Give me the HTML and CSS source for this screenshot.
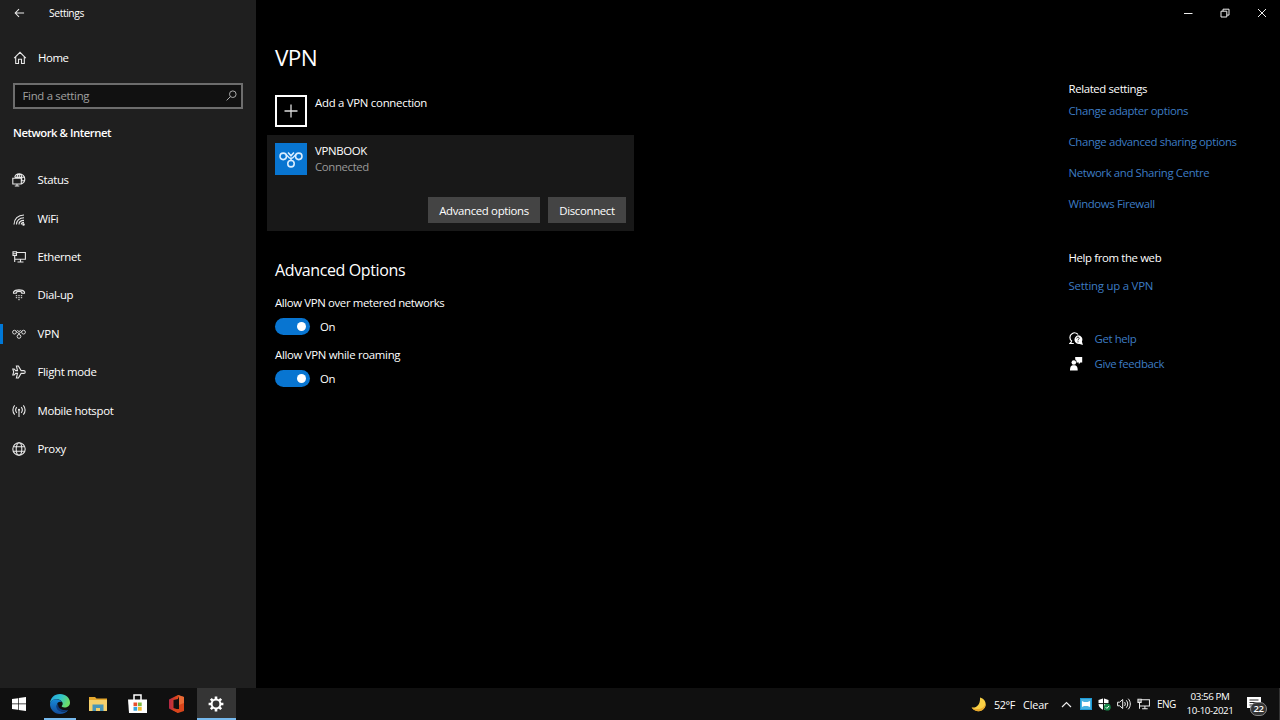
FILE: index.html
```html
<!DOCTYPE html>
<html lang="en">
<head>
<meta charset="utf-8">
<title>Settings</title>
<link rel="stylesheet" href="styles.css">
</head>
<body>
<svg class="defs" width="0" height="0">
  <symbol id="vpn" viewBox="0 0 26 18"><g fill="none" stroke="currentColor" stroke-width="1.7"><circle cx="4.600" cy="5.600" r="3.500"/><circle cx="21.400" cy="5.600" r="3.500"/><circle cx="13" cy="13.500" r="3.500"/><path d="M7.300 3.500c2 .6 2.600 4.300 5.700 4.300s3.700-3.700 5.700-4.300M9.800 1.500l3.200 3.500 3.200-3.500M13 7.500v2.500"/></g></symbol>
  <symbol id="eth" viewBox="0 0 14 12"><g fill="none" stroke="currentColor" stroke-width="1.1"><path d="M5 1.500h8.400v6.700H4.500M8.500 8.500v2.500M5.500 11h6M1 .8h3.500v3.700H1zM2.700 4.500V11M1 2.700h3.500M2.700 8.200H5"/></g></symbol>
</svg>
<div class="window">
  <aside class="sidebar">
    <header class="titlebar">
      <svg class="back" viewBox="0 0 12 10"><path d="M5.500.8L1.300 5l4.200 4.200M1.300 5H11"/></svg>
      <span class="caption">Settings</span>
    </header>
    <a class="home"><svg class="icon" viewBox="0 0 14 14"><path d="M1.200 7.200L7 1.400l5.800 5.800M2.700 6v6.500h2.800V8.200h3v4.300h2.800V6"/></svg><span>Home</span></a>
    <div class="search"><span>Find a setting</span><svg viewBox="0 0 11 11"><circle cx="6.800" cy="4.200" r="3.300"/><path d="M4.500 6.500L.6 10.400"/></svg></div>
    <h2 class="section">Network &amp; Internet</h2>
    <nav class="nav">
      <a class="item"><svg class="icon" viewBox="0 0 14 14"><path d="M2.700 4.300C3.200 2 5 .8 7.300.8c3.100 0 5.500 2.300 5.500 5.200 0 2.400-1.300 4-3 4.700M3 4.300h9.500M5 4.300C5.300 2.500 6 .8 7.300.8c1.400 0 2.200 1.700 2.400 3.500v3M9.700 7.800h3M7.300.8v3.500M.8 5.300h8.500v5.700H.8zM5 11v2M2.800 13h4.500"/></svg><span>Status</span></a>
      <a class="item"><svg class="icon" viewBox="0 0 14 14"><path d="M2 12.500C2 7 6 3 12 3M4.500 12.500C4.500 8.500 7.500 5.800 12 5.800M7 12.500C7 10 9 8.400 12 8.400M9.300 12.500c0-1.300 1.200-2.100 2.700-2.100"/><circle cx="11.500" cy="12.400" r=".7" fill="currentColor"/></svg><span>WiFi</span></a>
      <a class="item"><svg class="icon eth"><use href="#eth"/></svg><span>Ethernet</span></a>
      <a class="item"><svg class="icon" viewBox="0 0 14 14"><path d="M1.500 5.200V4C3.500 1.200 10.500 1.200 12.500 4v1.200H9.700V4C8.500 3.200 5.500 3.200 4.300 4v1.200z"/><path d="M3.800 7.700h1.400m1.100 0h1.400m1.100 0h1.400M3.800 9.700h1.400m1.100 0h1.400m1.100 0h1.400M6.300 11.700h1.400" stroke-width="1"/></svg><span>Dial-up</span></a>
      <a class="item active"><svg class="icon vpn"><use href="#vpn"/></svg><span class="v">VPN</span></a>
      <a class="item"><svg class="icon" viewBox="0 0 14 14"><path d="M.8 4h1.400l1.400 1.600h1.900L4.400 1h2l2.700 4.600h2.700c1.900 0 1.900 2.800 0 2.800H9.100L6.400 13h-2l1.100-4.600H3.600L2.200 10H.8l.9-3z"/></svg><span>Flight mode</span></a>
      <a class="item"><svg class="icon" viewBox="0 0 14 14"><path d="M2.700 1.400C.3 4 .3 8 2.700 10.600M4.800 3.200c-1.400 1.700-1.400 4 0 5.700M11.300 1.400c2.400 2.600 2.400 6.600 0 9.200M9.200 3.200c1.400 1.700 1.400 4 0 5.700M7 5.500V13"/><circle cx="7" cy="5.700" r=".5"/></svg><span>Mobile hotspot</span></a>
      <a class="item"><svg class="icon" viewBox="0 0 14 14"><circle cx="7" cy="7" r="6.200"/><ellipse cx="7" cy="7" rx="2.800" ry="6.200"/><path d="M1.500 4.700h11M1.500 9.300h11"/></svg><span>Proxy</span></a>
    </nav>
  </aside>
  <main class="content">
    <h1 class="title">VPN</h1>
    <div class="add"><span class="plus"><svg viewBox="0 0 16 16"><path d="M8 1.500v13M1.500 8h13"/></svg></span><span>Add a VPN connection</span></div>
    <section class="card">
      <div class="connection"><span class="tile"><svg><use href="#vpn"/></svg></span><div class="names"><span class="name">VPNBOOK</span><span class="state">Connected</span></div></div>
      <div class="actions"><button class="btn wide">Advanced options</button><button class="btn">Disconnect</button></div>
    </section>
    <h2 class="subtitle">Advanced Options</h2>
    <div class="option"><span class="metered">Allow VPN over metered networks</span><div class="toggle-row"><i class="toggle"></i><span class="on">On</span></div></div>
    <div class="option"><span class="roaming">Allow VPN while roaming</span><div class="toggle-row"><i class="toggle"></i><span class="on">On</span></div></div>
  </main>
  <aside class="related">
    <div class="controls">
      <svg viewBox="0 0 10 10"><path d="M1 5.500h8.500"/></svg>
      <svg viewBox="0 0 10 10"><path d="M1 3.200h5.800V9H1zM3 3.200V1.200h6v5.900H6.800"/></svg>
      <svg viewBox="0 0 10 10"><path d="M1 1l8 8M9 1L1 9"/></svg>
    </div>
    <h3 class="rel-head">Related settings</h3>
    <div class="links"><a>Change adapter options</a><a>Change advanced sharing options</a><a>Network and Sharing Centre</a><a>Windows Firewall</a></div>
    <h3 class="help-head">Help from the web</h3>
    <a class="setup">Setting up a VPN</a>
    <div class="support">
      <a><svg viewBox="0 0 14 14"><path d="M3 9.300C.2 7.500.2 3.400 3 1.700 5 .4 7.700.8 9 2.500M2.800 9.300L.8 11.500h4" fill="none" stroke="#fff" stroke-width="1.200"/><path d="M9 3.300a4.300 4.300 0 0 1 3.900 6.200l1 3.500-3.200-1.100A4.300 4.300 0 1 1 9 3.300z" fill="#fff"/><path d="M7.600 6.400c.2-1.800 3-1.500 2.500.2-.2.700-1.100.8-1.100 1.800M9 9.300v1" fill="none" stroke="#000" stroke-width=".9"/></svg><span>Get help</span></a>
      <a><svg viewBox="0 0 14 14" fill="#fff"><path d="M6.200 0h7v5.500h-1.800L9.800 7.200V5.500H7.500C7.700 3.700 7.300 3 6.200 2.500z"/><circle cx="4.800" cy="5.500" r="2.300"/><path d="M1 13.500c0-3.300.8-5.200 3.800-5.200s3.900 1.900 3.900 5.200z"/></svg><span>Give feedback</span></a>
    </div>
  </aside>
</div>
<footer class="taskbar">
  <div class="apps">
    <span class="app start"><svg width="14" height="14" viewBox="0 0 14 14" fill="#fff"><path d="M0 2l6-.8v5.400H0zM6.700 1.100L14 0v6.600H6.700zM0 7.300h6v5.500L0 12zM6.700 7.300H14V14l-7.300-1.100z"/></svg></span>
    <span class="app running"><svg width="20" height="20" viewBox="0 0 20 20"><defs><linearGradient id="eg" x1="0" y1="0" x2="1" y2=".4"><stop offset="0" stop-color="#239fe3"/><stop offset=".55" stop-color="#30c4cb"/><stop offset="1" stop-color="#6bdc68"/></linearGradient><linearGradient id="eb" x1="0" y1="0" x2="0" y2="1"><stop offset="0" stop-color="#1689d8"/><stop offset="1" stop-color="#134c9b"/></linearGradient></defs><path d="M0 10C0 4 4.300 0 10 0s10 4 10 8.500c0 3.500-2.400 5-5.500 5-2 0-3-.8-2.800-1.400.5-.8 1-1.200 1-2.400C12.700 6.800 9 4.800 5.500 5.300 2.500 5.700.5 7.500 0 10z" fill="url(#eg)"/><path d="M0 10c.5-3 3-4.700 6-4.700 3 0 5.200 1.400 6.100 3C9.400 7 6.700 8.700 6.700 12c0 3.300 3.200 5.700 6.700 5.500 2 0 3.400-.7 4.800-1.500C16.400 18.500 13.400 20 10 20 4.300 20 0 15.500 0 10z" fill="url(#eb)"/><path d="M7.800 9.500c-3.500 4.800.7 8.500 5.600 8 2-.2 3.700-.8 4.800-1.500-5 .7-9.200-.7-9.900-4z" fill="#0d3c80"/></svg></span>
    <span class="app"><svg width="18" height="16" viewBox="0 0 18 16"><path d="M0 1h6l1.500 1.500H18V15H0z" fill="#e5a82e"/><path d="M0 4h18v11H0z" fill="#f5d06c"/><path d="M3.500 8.500h11V15H11v-3H7v3H3.500z" fill="#4995b8"/></svg></span>
    <span class="app"><svg width="19" height="20" viewBox="0 0 19 20"><path d="M6 6V1h7v5" fill="none" stroke="#fff" stroke-width="1.500"/><path d="M0 5.500h19V19H1z" fill="#fff"/><path d="M5.500 8.500h3.700v3.700H5.500z" fill="#e84e2c"/><path d="M10 8.500h3.700v3.700H10z" fill="#7eb83f"/><path d="M5.500 13h3.700v3.700H5.500z" fill="#36a3dc"/><path d="M10 13h3.700v3.700H10z" fill="#f5b829"/></svg></span>
    <span class="app"><svg width="15" height="18" viewBox="0 0 15 18"><defs><linearGradient id="of" x1="0" x2="1"><stop stop-color="#b52846"/><stop offset="1" stop-color="#e54b16"/></linearGradient></defs><path d="M0 4.500L9 0v4L4.500 5v8L9 14.500V18L0 13.500z" fill="url(#of)"/><path d="M9 0l6 2v14l-6 2L2.500 14.600 10 14V3.500z" fill="#d8451b"/><path d="M9 0l6 2v6l-5 2V3.500z" fill="#e96a35"/></svg></span>
    <span class="app current"><svg width="16" height="16" viewBox="0 0 16 16" fill="none" stroke="#fff"><circle cx="8" cy="8" r="4.400" stroke-width="2"/><path d="M8 .6v2.700M8 12.700v2.700M.6 8h2.700M12.700 8h2.700M2.800 2.800l1.900 1.900M11.300 11.300l1.900 1.900M2.800 13.200l1.900-1.900M11.300 4.700l1.900-1.900" stroke-width="2.600"/></svg></span>
  </div>
  <div class="tray">
    <svg class="moon" viewBox="0 0 15 15"><path d="M9 .5c5 1.200 7 6 4.800 10C11.300 15 4.500 15.800.6 10.500 6.500 11.300 9.500 6.500 9 .5z" fill="#f9d045"/><path d="M14.300 7c-1.500 5-7.500 6.500-13.700 3.500C4.500 15.800 11.300 15 13.800 10.500c.6-1.200.8-2.400.5-3.500z" fill="#e9a72a"/></svg>
    <span class="temp">52°F</span><span class="clear">Clear</span>
    <svg class="chev" viewBox="0 0 11 7"><path d="M1 6l4.500-4.500L10 6" fill="none" stroke="#eee" stroke-width="1.200"/></svg>
    <svg class="cam" viewBox="0 0 12 12"><path fill="#1e9bd7" d="M0 0h12v12H0z"/><path fill="#48b1e0" d="M1 1h10v10H1z"/><path fill="#fff" d="M2 3l2 1h3.500L10 3v6L7.500 8H4L2 9z"/></svg>
    <svg class="shield" viewBox="0 0 13 13"><path d="M5.500.3L10.500 2v3.500c0 3.500-2.300 5.300-5 6.500-2.700-1.200-5-3-5-6.500V2z" fill="#fff"/><path d="M5.500 0v12M0 5.600h11" stroke="#111" stroke-width="1"/><circle cx="9.300" cy="9.200" r="3.400" fill="#198b4c"/><path d="M7.700 9.200l1.200 1.200L11 8" fill="none" stroke="#fff"/></svg>
    <svg class="sound" viewBox="0 0 14 12" fill="none" stroke="#eee"><path d="M.6 4.200h2L5.700 1.500v9L2.600 7.800h-2zM7.500 4c1 1 1 3 0 4M9.300 2.300c1.900 2 1.900 5.400 0 7.400M11.200.7c2.800 3 2.800 7.600 0 10.600"/></svg>
    <svg class="net"><use href="#eth"/></svg>
    <span class="lang">ENG</span>
    <div class="clock"><span class="time">03:56 PM</span><span class="date">10-10-2021</span></div>
    <div class="notes"><svg viewBox="0 0 14 14"><path d="M0 0h14v11H7l-3 3v-3H0z" fill="#fff"/><path d="M2.500 3h9M2.500 5.500h9M2.500 8h5" stroke="#222"/></svg><span class="badge">22</span></div>
  </div>
</footer>
</body>
</html>
```
FILE: styles.css
```css
* { box-sizing: border-box; }
body { margin: 0; width: 1280px; height: 720px; overflow: hidden; background: #000; color: #fff; font: 11.4px/16px "Open Sans", "Noto Sans", sans-serif; letter-spacing: -.37px; }
h1, h2, h3 { margin: 0; font-weight: 400; }
svg { display: block; flex: none; }
span, a { white-space: nowrap; }
.defs { position: absolute; }
.window { display: grid; grid-template-columns: 256px 1fr 211.500px; height: 688px; }

.sidebar { background: #1f1f1f; }
.titlebar { display: flex; align-items: center; height: 26px; padding-left: 14px; font-size: 10.300px; letter-spacing: -.4px; }
.back { width: 11px; height: 10px; fill: none; stroke: #eee; stroke-width: 1.100; }
.caption { margin-left: 24px; }
.home { display: flex; align-items: center; height: 24px; margin-top: 20px; padding-left: 13px; gap: 11px; }
.home span { letter-spacing: -.4px; }
.icon { width: 14px; height: 14px; fill: none; stroke: #e8e8e8; stroke-width: 1.100; color: #e8e8e8; }
.search { display: flex; align-items: center; justify-content: space-between; width: 230.500px; height: 26px; margin: 13px 0 0 12.500px; padding: 0 4px 1px 8px; border: 2px solid #6d6d6d; background: #111; color: #a0a0a0; letter-spacing: -.3px; }
.search svg { width: 11px; height: 11px; fill: none; stroke: #aaa; }
.section { margin: 16px 0 0 13px; font-size: 11.300px; line-height: 16px; font-weight: 600; letter-spacing: -.45px; }
.nav { display: grid; grid-auto-rows: 38.400px; margin-top: 20px; }
.item { display: flex; align-items: center; gap: 11.500px; padding-left: 12px; letter-spacing: -.32px; }
.item .vpn { stroke: none; height: 10px; }
.item .eth { stroke: none; height: 12px; }
.item .v { letter-spacing: -.1px; }
.active { padding-left: 0; }
.active::before { content: ""; width: 3px; height: 20px; margin-right: -2.500px; background: #0078d7; }

.content { padding-left: 11px; }
.title { margin: 42px 0 0 8px; font-size: 22.500px; line-height: 32px; letter-spacing: -.6px; }
.add { display: flex; gap: 8px; margin: 21px 0 0 8px; height: 32px; letter-spacing: -.27px; }
.plus { display: grid; place-items: center; width: 32px; height: 32px; border: 2px solid #fff; }
.plus svg { width: 16px; height: 16px; stroke: #ddd; stroke-width: 1.300; }
.card { display: flex; flex-direction: column; justify-content: space-between; width: 367px; height: 96px; margin-top: 8px; padding: 8px; background: #181818; }
.connection { display: flex; gap: 8px; }
.tile { display: grid; place-items: center; width: 32px; height: 32px; background: #0875d1; color: #d9edff; }
.tile svg { width: 24px; height: 17px; }
.names { display: flex; flex-direction: column; }
.state { color: #989898; }
.name { letter-spacing: -.35px; }
.actions { display: flex; justify-content: flex-end; gap: 8px; }
.btn { width: 78px; height: 26px; padding: 1px 0 0; border: 0; background: #444; color: #fff; font: inherit; letter-spacing: -.34px; }
.wide { width: 112px; }
.subtitle { margin: 28px 0 0 8px; font-size: 16px; line-height: 22px; letter-spacing: -.38px; }
.option { height: 52px; margin-left: 8px; }
.subtitle + .option { margin-top: 14px; }
.roaming { letter-spacing: -.3px; }
.toggle-row { display: flex; align-items: center; gap: 10px; height: 17px; margin-top: 7px; }
.on { padding-top: 1px; }
.toggle { width: 35px; height: 17px; padding: 4px; border-radius: 9px; background: #0875d1; }
.toggle::after { content: ""; display: block; width: 9px; height: 9px; margin-left: auto; border-radius: 50%; background: #fff; }

.controls { display: flex; justify-content: space-between; width: 84px; height: 26px; margin-left: 114px; align-items: center; }
.controls svg { width: 10px; height: 10px; fill: none; stroke: #eee; }
.rel-head, .help-head { font-size: 11.400px; line-height: 16px; }
.rel-head { margin-top: 55px; color: #fff; }
.related a { color: #3d7cc3; }
.links { display: flex; flex-direction: column; margin-top: 6px; gap: 15px; }
.help-head { margin-top: 38px; color: #fff; }
.setup { display: block; margin-top: 12px; letter-spacing: -.22px; }
.support { display: grid; grid-auto-rows: 25px; margin-top: 32px; }
.support a { display: flex; align-items: center; gap: 12px; }
.support svg { width: 14px; height: 14px; }

.taskbar { display: flex; justify-content: space-between; height: 32px; background: #101010; }
.apps { display: flex; }
.app { display: grid; place-items: center; width: 39.200px; height: 32px; padding-right: 1px; }
.start { padding-right: 2px; width: 40.200px; }
.running { box-shadow: inset 0 -2px #76b9ed; width: 32px; margin: 0 3.600px; padding-right: 0; }
.current { width: 38.500px; margin-left: .5px; background: #353535; box-shadow: inset 0 -2px #76b9ed; }
.tray { display: flex; align-items: center; width: 309px; font-size: 10.800px; border-right: 1px solid #333; }
.moon { width: 15px; height: 15px; }
.temp { width: 22px; margin-left: 8px; padding-top: 1px; }
.clear { width: 26px; margin-left: 7px; padding-top: 1px; letter-spacing: -.15px; }
.chev { width: 11px; height: 7px; margin-left: 12px; }
.cam { width: 12px; height: 12px; margin-left: 8px; }
.shield { width: 13px; height: 13px; margin-left: 6px; }
.sound { width: 14px; height: 12px; margin-left: 6px; }
.net { width: 13px; height: 12px; margin-left: 6px; color: #eee; }
.lang { width: 19px; margin-left: 7px; font-size: 10px; letter-spacing: -.5px; }
.clock { display: flex; flex-direction: column; align-items: center; width: 46px; margin-left: 11px; line-height: 14px; font-size: 9.800px; letter-spacing: -.42px; }
.notes { position: relative; width: 14px; height: 14px; margin-left: 14px; }
.notes svg { width: 14px; height: 14px; }
.badge { position: absolute; left: 3px; top: 5px; width: 17px; height: 14px; border: 1px solid #888; border-radius: 7px; background: #333; color: #fff; font-size: 9.500px; font-weight: 600; line-height: 12px; text-align: center; }
```
